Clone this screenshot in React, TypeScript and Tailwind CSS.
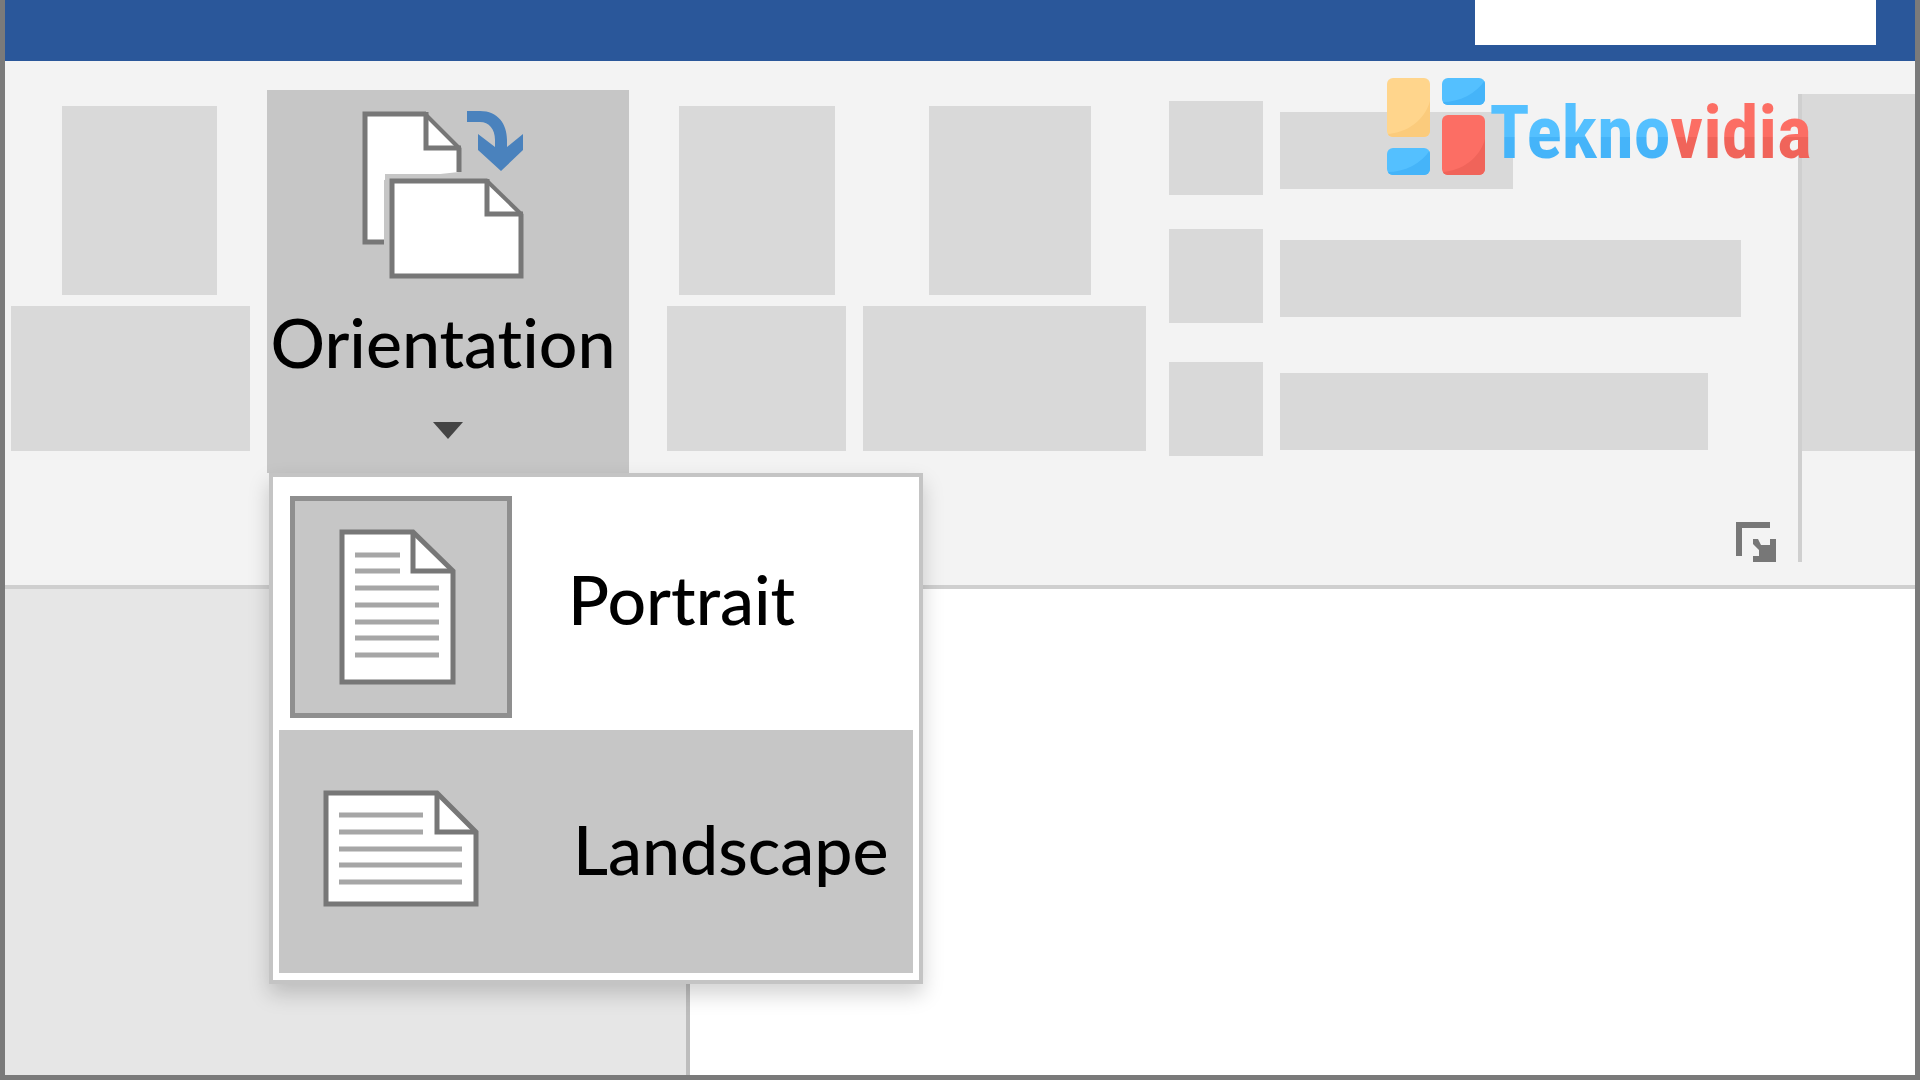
import React, { useState } from 'react';

type Orientation = 'portrait' | 'landscape';

// --- ICONS ---
function OrientationIcon() {
  return (
    <svg width="164" height="170" viewBox="361 110 164 170" fill="none" aria-hidden="true">
      <path d="M384 242H365V114H426L459 148V172L384 180Z" fill="#fff" />
      <path d="M384 242H365V114H426" stroke="#777" strokeWidth="5" />
      <path d="M459 148V172" stroke="#777" strokeWidth="5" />
      <path d="M425 114L460 149" stroke="#777" strokeWidth="4" />
      <path d="M426 112V148H461" stroke="#777" strokeWidth="5" />
      <path d="M385 174H487L525 212V280H385Z" fill="#c6c6c6" />
      <path d="M392 181H487L521 214V276H392Z" fill="#fff" />
      <path d="M487 181H392V276H521V214" stroke="#777" strokeWidth="5" />
      <path d="M486 180L522 215" stroke="#777" strokeWidth="4" />
      <path d="M487 179V214H523" stroke="#777" strokeWidth="5" />
      <path
        d="M467 111H480C498 111 507 124 507 140V147L523 134V150L501 171L478 150V134L495 147V140C495 129 489 122 480 122H467Z"
        fill="#4a82bd"
      />
    </svg>
  );
}

function PortraitIcon() {
  return (
    <svg width="117" height="156" viewBox="340 528 117 156" fill="none" aria-hidden="true">
      <path d="M343 531H414L454 570V681H343Z" fill="#fff" stroke="#777" strokeWidth="5" />
      <path d="M414 531V570H454" stroke="#777" strokeWidth="5" />
      <path
        d="M356 554H401M356 570H401M356 587H440M356 604H440M356 621H440M356 637H440M356 654H440"
        stroke="#a6a6a6"
        strokeWidth="5"
      />
    </svg>
  );
}

function LandscapeIcon() {
  return (
    <svg width="156" height="117" viewBox="323 790 156 117" fill="none" aria-hidden="true">
      <path d="M326 793H437L476 832V904H326Z" fill="#fff" stroke="#777" strokeWidth="5" />
      <path d="M437 793V832H476" stroke="#777" strokeWidth="5" />
      <path
        d="M339 815H423M339 832H423M339 849H462M339 865H462M339 882H462"
        stroke="#a6a6a6"
        strokeWidth="5"
      />
    </svg>
  );
}

function LauncherIcon() {
  return (
    <svg width="40" height="40" viewBox="0 0 40 40" aria-hidden="true">
      <path d="M0 0H34V6H6V34H0Z" fill="#777" />
      <path d="M17 17H22L25 23H34V17H40V40H17V34H23V28L17 22Z" fill="#777" />
    </svg>
  );
}

function LogoMark() {
  return (
    <svg width="98" height="98" viewBox="0 0 98 98" aria-hidden="true">
      <defs>
        <clipPath id="tile-a"><rect x="0" y="0" width="43" height="59" rx="6" /></clipPath>
        <clipPath id="tile-b"><rect x="0" y="70" width="43" height="27" rx="6" /></clipPath>
        <clipPath id="tile-c"><rect x="55" y="0" width="43" height="27" rx="6" /></clipPath>
        <clipPath id="tile-d"><rect x="55" y="37" width="43" height="60" rx="6" /></clipPath>
      </defs>
      <g clipPath="url(#tile-a)">
        <rect width="43" height="59" fill="#ffd58c" />
        <path d="M0 56C20 55 38 42 43 23V59H0Z" fill="#fbcb7c" />
      </g>
      <g clipPath="url(#tile-b)">
        <rect y="70" width="43" height="27" fill="#54c0ff" />
        <path d="M0 94C18 94 34 86 43 72V97H0Z" fill="#45b4f9" />
      </g>
      <g clipPath="url(#tile-c)">
        <rect x="55" width="43" height="27" fill="#54c0ff" />
        <path d="M55 24C73 24 89 16 98 2V27H55Z" fill="#45b4f9" />
      </g>
      <g clipPath="url(#tile-d)">
        <rect x="55" y="37" width="43" height="60" fill="#fc6e64" />
        <path d="M55 94C75 93 93 80 98 61V97H55Z" fill="#f0645a" />
      </g>
    </svg>
  );
}

// Greyed out ribbon command
function Block({ className }: { className: string }) {
  return <div className={`bg-[#d9d9d9] ${className}`} />;
}

const optionRows = [
  { row: '', bar: 'w-[233px]' },
  { row: 'mt-[34px]', bar: 'w-[461px]' },
  { row: 'mt-[39px]', bar: 'w-[428px]' },
];

export default function App() {
  const [hovered, setHovered] = useState<Orientation>('landscape');
  const [open, setOpen] = useState(true);

  return (
    <div className="relative flex min-h-screen flex-col border-x-[5px] border-b-[5px] border-[#7a7a7a] bg-white font-['Lato','Open_Sans',sans-serif] font-medium text-black [font-variant-ligatures:none]">
      {/* Title bar */}
      <header className="flex h-[61px] items-start justify-end bg-[#2a579a] pr-[39px]">
        <div className="h-[45px] w-[401px] bg-white" />
      </header>

      {/* Ribbon */}
      <section className="flex h-[528px] border-b-4 border-[#cfcfcf] bg-[#f3f3f3] pl-[6px]">
        <div className="flex shrink-0 flex-col gap-[11px] pt-[45px]">
          <Block className="ml-[51px] h-[189px] w-[155px]" />
          <Block className="h-[145px] w-[239px]" />
        </div>

        <div className="relative ml-[17px] mt-[29px] h-[383px] w-[362px] shrink-0">
          <button
            type="button"
            aria-haspopup="menu"
            aria-expanded={open}
            onClick={() => setOpen(!open)}
            className="flex h-full w-full flex-col items-center bg-[#c6c6c6] pt-[20px]"
          >
            <span className="flex flex-col items-center gap-[22px] pr-[10px]">
              <OrientationIcon />
              <span className="text-[68px] leading-[80px]">Orientation</span>
            </span>
            <svg className="mt-[40px]" width="30" height="17" viewBox="0 0 30 17" aria-hidden="true">
              <path d="M0 0H30L15 17Z" fill="#444" />
            </svg>
          </button>

          {open && (
            <div
              role="menu"
              className="absolute left-[2px] top-full z-10 w-[654px] border-4 border-[#c4c4c4] bg-white px-[6px] pb-[7px] pt-[6px] shadow-[0_10px_20px_rgba(0,0,0,0.18)]"
            >
              <button
                type="button"
                role="menuitem"
                onMouseEnter={() => setHovered('portrait')}
                className={`flex h-[247px] w-full items-center gap-[56px] pl-[11px] ${hovered === 'portrait' ? 'bg-[#c6c6c6]' : 'bg-white'}`}
              >
                <span className="flex size-[222px] items-center justify-center border-[5px] border-[#8f8f8f] bg-[#c6c6c6] pr-[8px]">
                  <PortraitIcon />
                </span>
                <span className="pb-[16px] text-[68px] leading-[80px]">Portrait</span>
              </button>
              <button
                type="button"
                role="menuitem"
                onMouseEnter={() => setHovered('landscape')}
                className={`flex h-[243px] w-full items-center gap-[61px] pb-[6px] pl-[11px] ${hovered === 'landscape' ? 'bg-[#c6c6c6]' : 'bg-white'}`}
              >
                <span className="flex w-[222px] justify-center">
                  <LandscapeIcon />
                </span>
                <span className="text-[68px] leading-[80px]">Landscape</span>
              </button>
            </div>
          )}
        </div>

        <div className="ml-[38px] flex shrink-0 flex-col gap-[11px] pt-[45px]">
          <Block className="ml-[12px] h-[189px] w-[156px]" />
          <Block className="h-[145px] w-[179px]" />
        </div>

        <div className="ml-[17px] flex shrink-0 flex-col gap-[11px] pt-[45px]">
          <Block className="ml-[66px] h-[189px] w-[162px]" />
          <Block className="h-[145px] w-[283px]" />
        </div>

        <div className="ml-[23px] flex min-w-0 flex-1 flex-col justify-between pb-[23px] pr-[22px] pt-[40px]">
          <div>
            {optionRows.map(({ row, bar }) => (
              <div key={bar} className={`flex gap-[17px] ${row}`}>
                <Block className="size-[94px] shrink-0" />
                <Block className={`mt-[11px] h-[77px] ${bar}`} />
              </div>
            ))}
          </div>
          <button type="button" aria-label="Page setup" className="self-end">
            <LauncherIcon />
          </button>
        </div>

        <div className="mb-[23px] mt-[33px] w-[117px] shrink-0 border-l-4 border-[#cfcfcf]">
          <Block className="h-[357px]" />
        </div>
      </section>

      {/* Document area */}
      <main className="flex flex-1">
        <aside className="w-[685px] border-r-4 border-[#bdbdbd] bg-[#e6e6e6]" />
        <div className="flex-1 bg-white" />
      </main>

      {/* Watermark */}
      <div className="absolute right-[103px] top-[78px] flex h-[98px] items-center gap-[5px]">
        <LogoMark />
        <span className="pt-[12px] font-['Roboto_Condensed','Liberation_Sans_Narrow','Roboto',sans-serif] text-[74px] font-bold leading-[98px]">
          <span className="bg-linear-to-b from-[#54c0ff] from-55% to-[#45b4f9] to-55% bg-clip-text text-transparent">Tekno</span>
          <span className="bg-linear-to-b from-[#fc6e64] from-55% to-[#f0645a] to-55% bg-clip-text text-transparent">vidia</span>
        </span>
      </div>
    </div>
  );
}
